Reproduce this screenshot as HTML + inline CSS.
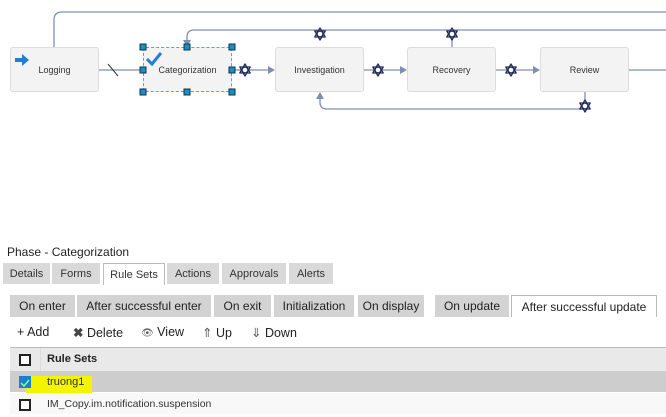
<!DOCTYPE html>
<html><head><style>
*{margin:0;padding:0;box-sizing:border-box}
body{width:666px;height:417px;background:#fff;font-family:"Liberation Sans",sans-serif;position:relative;overflow:hidden;color:#222}
.a{position:absolute}
.box{position:absolute;top:47px;height:45px;width:89px;background:#f3f3f3;border:1px solid #dcdcdc;border-radius:3px;font-size:9px;color:#333;display:flex;align-items:center;justify-content:center}
.tab{position:absolute;top:263px;height:21px;background:#d9d9d9;font-size:11px;color:#333;display:flex;align-items:center;justify-content:center}
.st{position:absolute;top:295px;height:22px;background:#d3d3d3;font-size:12px;color:#222;display:flex;align-items:center;justify-content:center}
.tb{position:absolute;top:325px;font-size:12.5px;color:#222}
.cb{position:absolute;width:12px;height:12px;border:2px solid #222;background:#fff}
</style></head><body>
<svg class="a" style="left:0;top:0" width="666" height="125">
<g fill="none" stroke="#7d8fb0" stroke-width="1.3">
<path d="M54 47 V20 Q54 12 62 12 H666"/>
<path d="M187 44 V37 Q187 30 194 30 H666"/>
<path d="M320 95 V102 Q320 109 327 109 H585"/>
<path d="M452 34 V47"/><path d="M585 92 V104"/>
<path d="M98 70 H140"/><path d="M232 70 H268"/><path d="M364 70 H400"/><path d="M496 70 H533"/><path d="M628 70 H666"/>
</g>
<path d="M108 64 L118 76" stroke="#333" stroke-width="1"/>
<g fill="#7d8fb0">
<path d="M268 66 L275 70 L268 74Z"/><path d="M400 66 L407 70 L400 74Z"/><path d="M533 66 L540 70 L533 74Z"/>
<path d="M183 40 L187 47 L191 40Z"/><path d="M316 99 L320 92 L324 99Z"/>
</g>
<defs><g id="g"><path d="M0 -6 L5.2 3 L-5.2 3Z M0 6 L5.2 -3 L-5.2 -3Z" fill="#fff" stroke="#1e2a5a" stroke-width="1.3" stroke-linejoin="round"/><circle r="2.8" fill="#fff" stroke="#1e2a5a" stroke-width="1"/></g></defs>
<use href="#g" x="245" y="70"/><use href="#g" x="378" y="70"/><use href="#g" x="511" y="70"/>
<use href="#g" x="320" y="34"/><use href="#g" x="452" y="34"/><use href="#g" x="585" y="106"/>
</svg>
<div class="box" style="left:10px">Logging</div>
<div class="a" style="left:15px;top:53px;width:14px;height:12px"><svg width="14" height="12"><path d="M0 4 H7 V0 L14 6 L7 12 V8 H0Z" fill="#1e7ed8"/></svg></div>
<div class="box" style="left:143px;width:89px;border:1px dashed #5aa6c8;background:#f3f3f3">Categorization</div>
<svg class="a" style="left:146px;top:52px" width="16" height="14"><path d="M1 7 L6 12 L15 1" fill="none" stroke="#1e7ed8" stroke-width="3"/></svg>
<div class="box" style="left:275px">Investigation</div>
<div class="box" style="left:407px">Recovery</div>
<div class="box" style="left:540px">Review</div>
<svg class="a" style="left:0;top:0" width="666" height="125">
<g fill="#1b8ec8" stroke="#134"><rect x="140" y="44" width="6" height="6"/><rect x="184" y="44" width="6" height="6"/><rect x="229" y="44" width="6" height="6"/><rect x="140" y="67" width="6" height="6"/><rect x="229" y="67" width="6" height="6"/><rect x="140" y="89" width="6" height="6"/><rect x="184" y="89" width="6" height="6"/><rect x="229" y="89" width="6" height="6"/></g>
</svg>
<div class="a" style="left:7px;top:245px;font-size:12px;color:#222">Phase - Categorization</div>
<div class="tab" style="left:3px;width:47px">Details</div>
<div class="tab" style="left:52px;width:48px">Forms</div>
<div class="tab" style="left:103px;width:62px;background:#fff;border:1px solid #bbb;border-bottom:none;top:263px;height:22px">Rule Sets</div>
<div class="tab" style="left:167px;width:52px">Actions</div>
<div class="tab" style="left:222px;width:64px">Approvals</div>
<div class="tab" style="left:289px;width:44px">Alerts</div>
<div class="st" style="left:10px;width:65px">On enter</div>
<div class="st" style="left:77px;width:134px">After successful enter</div>
<div class="st" style="left:214px;width:57px">On exit</div>
<div class="st" style="left:274px;width:80px">Initialization</div>
<div class="st" style="left:358px;width:66px">On display</div>
<div class="st" style="left:435px;width:74px">On update</div>
<div class="st" style="left:511px;width:146px;background:#fff;border:1px solid #bbb;border-bottom:none">After successful update</div>
<div class="tb" style="left:17px">+ Add</div>
<div class="tb" style="left:73px"><b style="color:#444">✖</b> Delete</div>
<div class="tb" style="left:141px"><span style="color:#555;font-size:10px">👁</span> View</div>
<div class="tb" style="left:202px"><span style="color:#555">⇑</span> Up</div>
<div class="tb" style="left:251px"><span style="color:#555">⇓</span> Down</div>
<div class="a" style="left:10px;top:347px;width:656px;height:1px;background:#bbb"></div>
<div class="a" style="left:10px;top:348px;width:656px;height:23px;background:#e9e9e9"></div>
<div class="a" style="left:40px;top:348px;width:1px;height:66px;background:#ddd"></div>
<div class="cb" style="left:19px;top:354px"></div>
<div class="a" style="left:47px;top:353px;font-size:11px;font-weight:bold;color:#222">Rule Sets</div>
<div class="a" style="left:10px;top:371px;width:656px;height:21px;background:#cdcdcd"></div>
<div class="a" style="left:26px;top:376px;width:66px;height:18px;background:#f4f400"></div>
<div class="a" style="left:19px;top:376px;width:12px;height:12px;background:#1a7fd4"><svg width="12" height="12"><path d="M2 6 L5 9 L10 3" fill="none" stroke="#8f8" stroke-width="1.5"/></svg></div>
<div class="a" style="left:47px;top:376px;font-size:11px;color:#333">truong1</div>
<div class="a" style="left:10px;top:393px;width:656px;height:21px;background:#f8f8f8"></div>
<div class="cb" style="left:19px;top:399px"></div>
<div class="a" style="left:47px;top:398px;font-size:10.5px;color:#333">IM_Copy.im.notification.suspension</div>
</body></html>
